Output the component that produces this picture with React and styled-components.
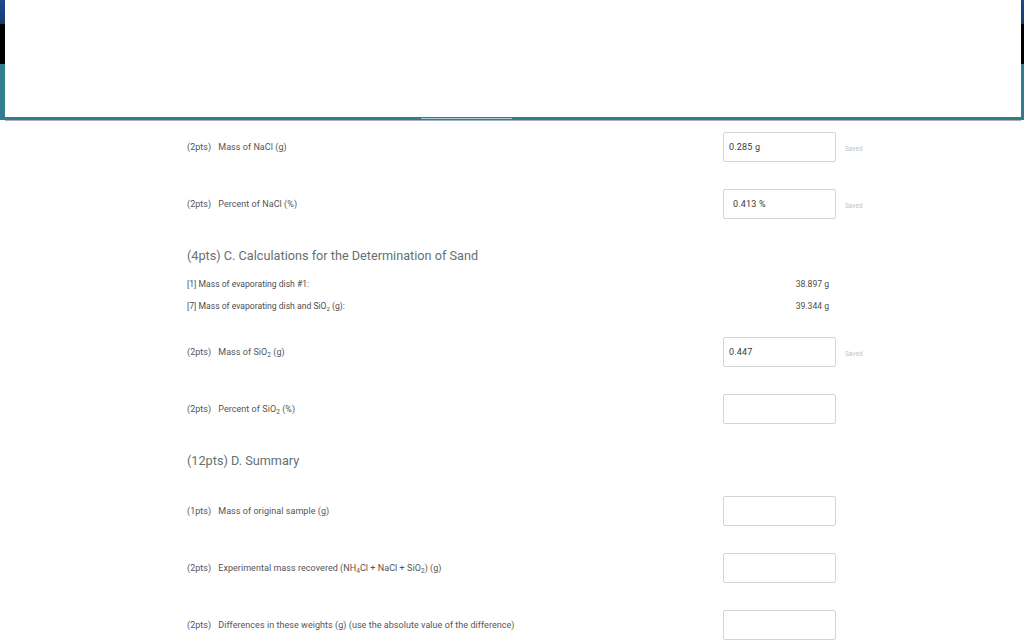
import React from "react";
import styled, { createGlobalStyle } from "styled-components";

const Global = createGlobalStyle`
  html, body { margin: 0; padding: 0; background: #fff; }
  body { font-family: Roboto, "Liberation Sans", Arial, sans-serif; overflow: hidden; }
  * { box-sizing: border-box; }
`;

const Page = styled.div`
  width: 1024px;
  height: 640px;
  overflow: hidden;
  background: #fff;
`;

const TopBand = styled.div`
  height: 120px;
  padding: 0 3px 0 5px;
  background: linear-gradient(
    to bottom,
    #1f4a8e 0px,
    #183a70 24px,
    #000 24px,
    #000 64px,
    #327c8e 64px,
    #327c8e 120px
  );
`;

const Panel = styled.div`
  position: relative;
  height: 120px;
  background: #fff;
  border-bottom: 3px solid #357a8d;
  box-shadow: 0 1px 0 #a9b1b3;
`;

const ScrollMark = styled.div`
  position: absolute;
  left: 416px;
  bottom: -2px;
  width: 91px;
  height: 1px;
  background: #9fd0e4;
`;

const Content = styled.div`
  padding: 12px 0 0 187px;
  display: flex;
  flex-direction: column;
`;

const QuestionRow = styled.div`
  display: flex;
  align-items: center;
  height: 30px;
  margin-top: ${(p) => p.$mt || 0}px;
`;

const Label = styled.div`
  width: 536px;
  font-size: 9px;
  color: #555;
  display: flex;
  gap: 7px;
  white-space: nowrap;
  letter-spacing: 0.05px;
  sub { font-size: 6.5px; vertical-align: -2px; line-height: 0; }
`;

const InputBox = styled.div`
  width: 113px;
  height: 30px;
  border: 1px solid #d4d4d4;
  border-radius: 2px;
  display: flex;
  align-items: center;
  padding-left: ${(p) => p.$pad || 5}px;
  font-size: 9px;
  color: #3a3a3a;
  letter-spacing: 0.2px;
`;

const Saved = styled.span`
  margin-left: 9px;
  font-size: 6.5px;
  color: #c2c2c2;
  margin-top: 4px;
`;

const SectionTitle = styled.div`
  height: 18px;
  line-height: 18px;
  font-size: 12.7px;
  color: #65716f;
  margin-top: ${(p) => p.$mt || 0}px;
`;

const DataLine = styled.div`
  width: 642px;
  height: 22px;
  display: flex;
  align-items: center;
  justify-content: space-between;
  font-size: 8.6px;
  color: #4d4d4d;
  margin-top: ${(p) => p.$mt || 0}px;
  sub { font-size: 6px; vertical-align: -2px; line-height: 0; }
`;

const Question = ({ mt, pts, children, value, saved, pad }) => (
  <QuestionRow $mt={mt}>
    <Label>
      <span>({pts})</span>
      <span>{children}</span>
    </Label>
    <InputBox $pad={pad}>{value}</InputBox>
    {saved && <Saved>Saved</Saved>}
  </QuestionRow>
);

export default function App() {
  return (
    <Page>
      <Global />
      <TopBand>
        <Panel>
          <ScrollMark />
        </Panel>
      </TopBand>
      <Content>
        <Question pts="2pts" value="0.285 g" saved>
          Mass of NaCl (g)
        </Question>
        <Question mt={27} pts="2pts" value="0.413 %" saved pad={9}>
          Percent of NaCl (%)
        </Question>
        <SectionTitle $mt={28}>(4pts) C. Calculations for the Determination of Sand</SectionTitle>
        <DataLine $mt={8}>
          <span>[1] Mass of evaporating dish #1:</span>
          <span>38.897 g</span>
        </DataLine>
        <DataLine>
          <span>
            [7] Mass of evaporating dish and SiO<sub>2</sub> (g):
          </span>
          <span>39.344 g</span>
        </DataLine>
        <Question mt={20} pts="2pts" value="0.447" saved>
          Mass of SiO<sub>2</sub> (g)
        </Question>
        <Question mt={27} pts="2pts">
          Percent of SiO<sub>2</sub> (%)
        </Question>
        <SectionTitle $mt={28}>(12pts) D. Summary</SectionTitle>
        <Question mt={26} pts="1pts">
          Mass of original sample (g)
        </Question>
        <Question mt={27} pts="2pts">
          Experimental mass recovered (NH<sub>4</sub>Cl + NaCl + SiO<sub>2</sub>) (g)
        </Question>
        <Question mt={27} pts="2pts">
          Differences in these weights (g) (use the absolute value of the difference)
        </Question>
      </Content>
    </Page>
  );
}
